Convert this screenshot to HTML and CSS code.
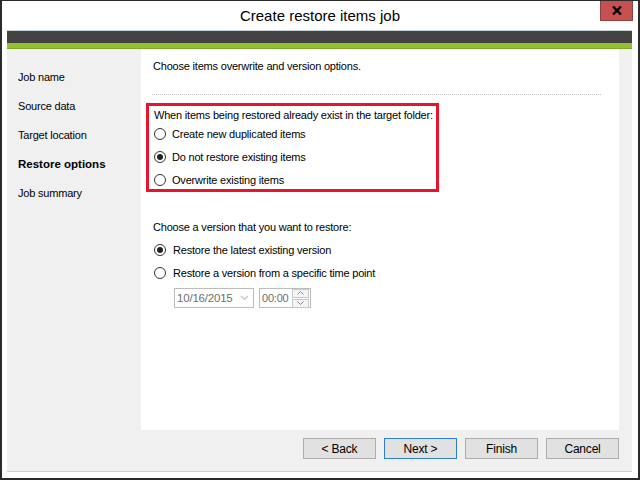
FILE: index.html
```html
<!DOCTYPE html>
<html lang="en">
<head>
  <meta charset="UTF-8" />
  <title>Create restore items job</title>
  <link rel="stylesheet" href="styles.css">
</head>
<body>
  <div class="window">
    <div class="titlebar">
      <span></span>
      <span class="title">Create restore items job</span>
      <button class="close" title="Close">
        <svg width="10" height="9" viewBox="0 0 10 9">
          <path d="M1 0.5 L9 8.5 M9 0.5 L1 8.5" stroke="#000" stroke-width="2.4" fill="none" />
        </svg>
      </button>
    </div>

    <div class="frame">
      <div class="banner"></div>
      <div class="accent"></div>

      <div class="body">
        <ul class="steps">
          <li>Job name</li>
          <li>Source data</li>
          <li>Target location</li>
          <li class="current">Restore options</li>
          <li>Job summary</li>
        </ul>

        <div class="page">
          <p class="intro">Choose items overwrite and version options.</p>
          <div class="rule"></div>

          <div class="group highlighted">
            <div class="group-title">When items being restored already exist in the target folder:</div>
            <div class="options">
              <div class="option"><span class="radio"></span>Create new duplicated items</div>
              <div class="option"><span class="radio checked"></span>Do not restore existing items</div>
              <div class="option"><span class="radio"></span>Overwrite existing items</div>
            </div>
          </div>

          <div class="group version">
            <div class="group-title">Choose a version that you want to restore:</div>
            <div class="options">
              <div class="option"><span class="radio checked"></span>Restore the latest existing version</div>
              <div class="option"><span class="radio"></span>Restore a version from a specific time point</div>
            </div>
            <div class="pickers">
              <div class="date-box">
                <span>10/16/2015</span>
                <svg width="9" height="6" viewBox="0 0 9 6">
                  <path d="M1 1 L4.5 4.5 L8 1" stroke="#c4c4c4" stroke-width="1.2" fill="none" />
                </svg>
              </div>
              <div class="time-box">
                <span>00:00</span>
                <div class="spin">
                  <span class="spin-btn">
                    <svg width="7" height="4" viewBox="0 0 7 4"><path d="M0.5 3.5 L3.5 0.5 L6.5 3.5" stroke="#8a8a8a" fill="none" /></svg>
                  </span>
                  <span class="spin-btn">
                    <svg width="7" height="4" viewBox="0 0 7 4"><path d="M0.5 0.5 L3.5 3.5 L6.5 0.5" stroke="#8a8a8a" fill="none" /></svg>
                  </span>
                </div>
              </div>
            </div>
          </div>
        </div>
      </div>

      <div class="footer">
        <button class="btn">&lt; Back</button>
        <button class="btn default">Next &gt;</button>
        <button class="btn">Finish</button>
        <button class="btn">Cancel</button>
      </div>
    </div>
  </div>
</body>
</html>
```

FILE: styles.css
```css
body {
  margin: 0;
  font-family: "Liberation Sans", Arial, sans-serif;
  font-size: 11px;
  letter-spacing: -0.2px;
  color: #000;
}

.window {
  width: 640px;
  height: 480px;
  box-sizing: border-box;
  border: 2px solid #2b2b2b;
  border-top-width: 1px;
  background: #fff;
  display: flex;
  flex-direction: column;
}

.titlebar {
  height: 29px;
  display: grid;
  grid-template-columns: 1fr auto 1fr;
}

.title {
  font-size: 15px;
  letter-spacing: 0;
  line-height: 29px;
}

.close {
  justify-self: end;
  align-self: start;
  width: 33px;
  height: 20px;
  margin: 0 5px 0 0;
  padding: 0;
  background: #c75050;
  border: 1px solid #8e3f3f;
  border-top: none;
  display: flex;
  align-items: center;
  justify-content: center;
}

.frame {
  flex: 1;
  display: flex;
  flex-direction: column;
  margin: 0 6px 6px 5px;
  background: #f0f0f0;
}

.banner {
  height: 12px;
  background: #434343;
  border-top: 1px solid #c8d0dc;
}

.accent {
  height: 5px;
  background: #93c130;
  border-bottom: 1px solid #7fa82a;
}

.body {
  flex: 1;
  display: flex;
  padding-right: 13px;
}

.steps {
  width: 134px;
  box-sizing: border-box;
  margin: 0;
  padding: 14px 0 0 11px;
  list-style: none;
}

.steps li {
  line-height: 29px;
}

.steps li.current {
  font-weight: bold;
  font-size: 11.5px;
  letter-spacing: 0;
}

.page {
  flex: 1;
  background: #fff;
  padding: 9px 18px 0 5px;
}

.intro {
  margin: 0;
  padding-left: 7px;
  line-height: 16px;
}

.rule {
  margin: 20px 0 0 6px;
  border-top: 1px dotted #c3c3c3;
}

.group-title {
  line-height: 16px;
}

.options {
  display: flex;
  flex-direction: column;
  gap: 7px;
  margin-top: 3px;
}

.option {
  display: flex;
  align-items: center;
  height: 16px;
}

.radio {
  width: 12px;
  height: 12px;
  box-sizing: border-box;
  border: 1px solid #333;
  border-radius: 50%;
  background: #fff;
  margin-right: 6px;
  display: flex;
  align-items: center;
  justify-content: center;
}

.radio.checked::after {
  content: "";
  width: 6px;
  height: 6px;
  border-radius: 50%;
  background: #222;
}

.highlighted {
  width: 293px;
  box-sizing: border-box;
  margin-top: 8px;
  border: 3px solid #e8132f;
  padding: 1px 0 1px 5px;
}

.version {
  margin-top: 27px;
  padding-left: 7px;
}

.version .options {
  margin-top: 7px;
}

.version .radio {
  margin-left: 1px;
  margin-right: 7px;
}

.pickers {
  display: flex;
  gap: 5px;
  margin: 7px 0 0 21px;
}

.date-box,
.time-box {
  height: 20px;
  box-sizing: border-box;
  border: 1px solid #bcbcbc;
  color: #6d6d6d;
  display: flex;
  align-items: center;
}

.date-box {
  width: 80px;
  padding: 0 4px 0 2px;
  justify-content: space-between;
  font-size: 11.5px;
}

.time-box {
  width: 52px;
  padding: 0 1px 0 2px;
  justify-content: space-between;
}

.spin {
  display: flex;
  flex-direction: column;
  gap: 1px;
}

.spin-btn {
  width: 15px;
  height: 7px;
  border: 1px solid #c9c9c9;
  background: #f4f4f4;
  display: flex;
  align-items: center;
  justify-content: center;
}

.footer {
  height: 33px;
  display: flex;
  justify-content: flex-end;
  align-items: flex-start;
  gap: 8px;
  padding: 8px 13px 0 0;
  border-bottom: 1px solid #c9d1de;
}

.btn {
  width: 73px;
  height: 21px;
  padding: 0;
  font-family: inherit;
  font-size: 12px;
  letter-spacing: -0.2px;
  color: #000;
  background: #e1e1e1;
  border: 1px solid #adadad;
}

.btn.default {
  border-color: #2f7fd0;
}
```
